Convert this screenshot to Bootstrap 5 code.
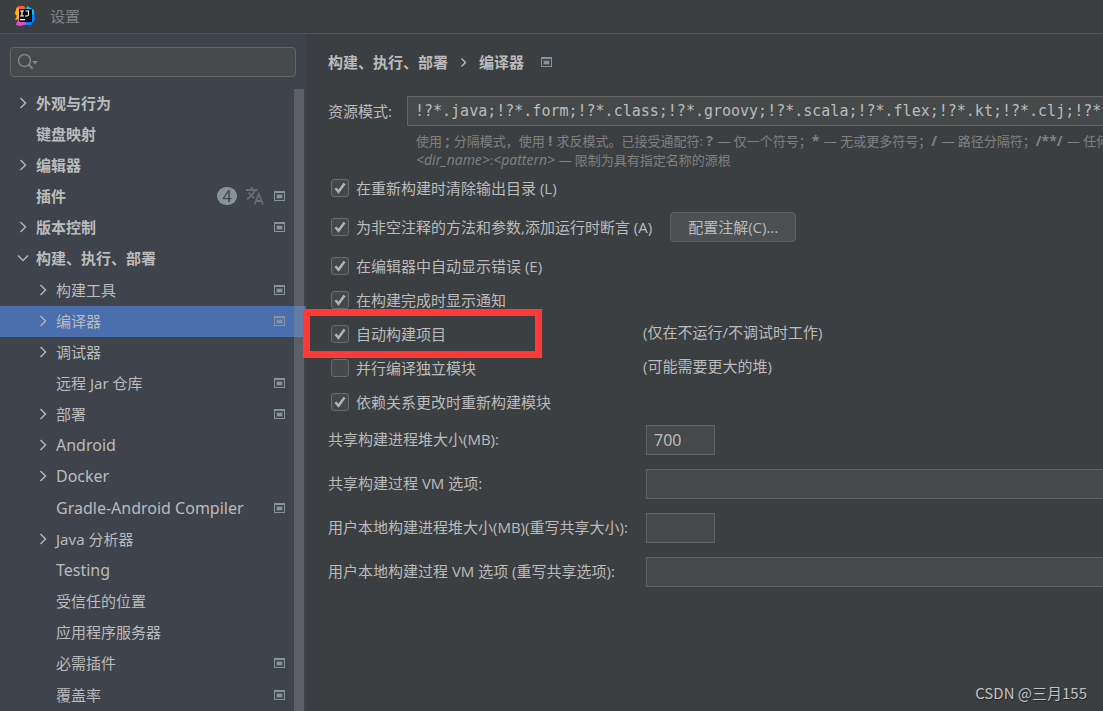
<!DOCTYPE html>
<html lang="zh-CN" data-bs-theme="dark">
<head>
<meta charset="utf-8">
<meta name="viewport" content="width=device-width, initial-scale=1">
<title>设置</title>
<link href="https://cdn.jsdelivr.net/npm/bootstrap@5.3.0/dist/css/bootstrap.min.css" rel="stylesheet">
<style>
  body { background: #3c3f41; color: #bbbbbb; font: 15px/20px "Open Sans", "Noto Sans CJK SC", sans-serif; }
  .title-bar { height: 34px; padding: 0 14px 2px; gap: 14px; border-bottom: 1px solid #505355; color: #808285; }
  .side-pane { width: 306px; background: #3e434c; }
  .search-box { margin: 13px 10px 11px; }
  .search-box svg { left: 7px; top: 6px; }
  .field { height: 30px; padding: 0 7px; background: #45494a; border: 1px solid #646464; border-radius: 0; color: #bbbbbb; font-size: 15px; }
  .field:focus { background: #45494a; color: #bbbbbb; }
  .search-box .field { border-radius: 4px; padding-left: 34px; }
  .tree-row { flex: 1 0 31px; display: flex; align-items: center; padding: 0 21px 2px 16px; color: #bbbbbb; text-decoration: none; font-family: "Noto Sans", "Noto Sans CJK SC", sans-serif; }
  .tree-row.top { font-weight: 700; }
  .tree-row.sub { padding-left: 36px; }
  .tree-row.active { background: #4b6eaf; }
  .latin { font-size: 16px; }
  .arrow { width: 14px; height: 14px; margin-right: 6px; flex: none; }
  .count { width: 20px; height: 18px; border-radius: 9px; background: #87939a; color: #3e434c; font-size: 16px; line-height: 18px; font-weight: 400; text-align: center; }
  .translate-icon { margin: 0 10px 0 9px; }
  .scroll-thumb { top: 55px; right: 2px; width: 10px; bottom: 0; background: rgba(150, 150, 150, .35); }
  .main-pane { min-width: 0; padding: 17px 0 0 22px; }
  .crumbs { height: 22px; gap: 13px; font-weight: 700; }
  .pattern-row { margin-top: 23px; gap: 15px; }
  .pattern-row .field { font-family: "DejaVu Sans Mono", monospace; padding-right: 0; }
  .hint { padding: 6px 0 1px 88px; font-size: 13px; line-height: 19px; color: #808080; }
  .hint b { padding-right: 1px; font-size: 14px; line-height: 1; }
  .hint i { font-size: 14px; line-height: 1; }
  .option { height: 34px; }
  .option .form-check-input { width: 18px; height: 18px; margin: 0 7px 1px 3px; border: 1px solid #6b6b6b; border-radius: 3px; background-color: #43494a; flex: none; }
  .option .form-check-input:checked { background-color: #43494a; border-color: #6b6b6b; background-size: 18px 18px;
    background-image: url("data:image/svg+xml,%3Csvg xmlns='http://www.w3.org/2000/svg' viewBox='0 0 18 18'%3E%3Cpath d='M4.500 9.200 7.500 12.800 13.500 4.500' fill='none' stroke='%23b4b4b4' stroke-width='2.400'/%3E%3C/svg%3E"); }
  .spaced { margin-bottom: 5px; }
  .with-note { display: grid; grid-template-columns: 315px 1fr; align-items: center; }
  .with-note > span { padding-bottom: 4px; }
  .config-btn { height: 30px; margin-left: 18px; padding: 0 17px; background: #4c5052; border: 1px solid #5e6060; border-radius: 4px; color: #bbbbbb; font-size: 15px; line-height: 20px; }
  .marker { left: -25px; top: -8px; width: 239px; bottom: -7px; border: 7px solid #ff3838; }
  .settings-grid { display: grid; grid-template-columns: 318px 1fr; row-gap: 14px; padding-top: 6px; align-items: center; }
  .settings-grid label { padding-bottom: 2px; }
  .settings-grid .field { font-family: "Noto Sans", "Noto Sans CJK SC", sans-serif; font-size: 16px; }
  .short { width: 69px; }
  .watermark { right: 16px; bottom: 8px; color: #c2c2c2; font: 15px/20px "Noto Sans CJK SC", sans-serif; text-shadow: 1px 1px 1px #222; }
</style>
</head>
<body>
<svg class="d-none">
  <symbol id="right" viewBox="0 0 14 14"><path d="M4.500 2 9.500 7 4.500 12" fill="none" stroke="#b0b3b5" stroke-width="1.500"/></symbol>
  <symbol id="down" viewBox="0 0 14 14"><path d="M2 4.500 7 9.500 12 4.500" fill="none" stroke="#b0b3b5" stroke-width="1.500"/></symbol>
  <symbol id="proj" viewBox="0 0 11 10"><path fill="#87939a" fill-rule="evenodd" d="M0 0h11v10H0zM1 2v7h9V2z"/><path fill="#87939a" fill-opacity=".35" d="M2 3h7v5H2z"/><path fill="#87939a" d="M3 4h5v3H3z"/></symbol>
</svg>
<div class="d-flex flex-column min-vh-100 overflow-hidden">
  <header class="title-bar d-flex align-items-center">
    <svg width="22" height="22" viewBox="0 0 22 22" aria-label="IntelliJ IDEA" role="img">
      <path d="M3 2 9 1 12 5 7 18 2 20 4 14 1 9z" fill="#ff318c"/>
      <path d="M1 8 3 2 7 4 5 14 1 15 3 11z" fill="#fdb60d"/>
      <path d="M4 1 10 1 13 6 5 7z" fill="#fa5c3c"/>
      <path d="M13 1 20 5 21 15 17 20 9 20 15 10z" fill="#087cfa"/>
      <path d="M13 1 20 5 20 10 12 5z" fill="#07c3f2"/>
      <path d="M2 20 5 13 13 19 6 21z" fill="#e84cc4"/>
      <path d="M5 4h13v13H5z" fill="#08080c"/>
      <path d="M6 6h4M8 6v5M6 11h4M11.500 6h3v3.500q0 1.500-1.500 1.500h-2" fill="none" stroke="#fff" stroke-width="1.200"/>
      <path d="M6 14h5v1.300H6z" fill="#fff"/>
    </svg>
    <span>设置</span>
  </header>
  <div class="d-flex flex-fill">
    <aside class="side-pane position-relative d-flex flex-column flex-shrink-0">
      <div class="search-box position-relative">
        <input type="search" class="field form-control" aria-label="搜索">
        <svg class="position-absolute" width="24" height="18" viewBox="0 0 24 18"><circle cx="7.500" cy="7.500" r="6" fill="none" stroke="#7d868c" stroke-width="1.500"/><path d="m11.500 11.500 4 4" stroke="#7d868c" stroke-width="2"/><path d="M15 8h6l-3 3.500z" fill="#7d868c"/></svg>
      </div>
      <nav class="d-flex flex-column flex-fill">
        <a href="#" class="tree-row top"><svg class="arrow"><use href="#right"/></svg>外观与行为</a>
        <a href="#" class="tree-row top"><span class="arrow"></span>键盘映射</a>
        <a href="#" class="tree-row top"><svg class="arrow"><use href="#right"/></svg>编辑器</a>
        <a href="#" class="tree-row top"><span class="arrow"></span>插件
          <span class="count ms-auto">4</span>
          <svg class="translate-icon" width="18" height="18" viewBox="0 0 18 18" fill="none" stroke="#666d75" stroke-width="1.800"><path d="M0 3h11.500M5.700 0v3M9 3Q7.500 8 1 12M2.800 5.500Q5 9.500 8.500 11M8.500 17.500 12.700 7 17 17.500M10 14h5.500"/></svg>
          <svg width="11" height="10"><use href="#proj"/></svg></a>
        <a href="#" class="tree-row top"><svg class="arrow"><use href="#right"/></svg>版本控制<svg class="ms-auto" width="11" height="10"><use href="#proj"/></svg></a>
        <a href="#" class="tree-row top"><svg class="arrow"><use href="#down"/></svg>构建、执行、部署</a>
        <a href="#" class="tree-row sub"><svg class="arrow"><use href="#right"/></svg>构建工具<svg class="ms-auto" width="11" height="10"><use href="#proj"/></svg></a>
        <a href="#" class="tree-row sub active"><svg class="arrow"><use href="#right"/></svg>编译器<svg class="ms-auto" width="11" height="10"><use href="#proj"/></svg></a>
        <a href="#" class="tree-row sub"><svg class="arrow"><use href="#right"/></svg>调试器</a>
        <a href="#" class="tree-row sub"><span class="arrow"></span>远程 Jar 仓库<svg class="ms-auto" width="11" height="10"><use href="#proj"/></svg></a>
        <a href="#" class="tree-row sub"><svg class="arrow"><use href="#right"/></svg>部署<svg class="ms-auto" width="11" height="10"><use href="#proj"/></svg></a>
        <a href="#" class="tree-row sub latin"><svg class="arrow"><use href="#right"/></svg>Android</a>
        <a href="#" class="tree-row sub latin"><svg class="arrow"><use href="#right"/></svg>Docker</a>
        <a href="#" class="tree-row sub latin"><span class="arrow"></span>Gradle-Android Compiler<svg class="ms-auto" width="11" height="10"><use href="#proj"/></svg></a>
        <a href="#" class="tree-row sub"><svg class="arrow"><use href="#right"/></svg>Java 分析器</a>
        <a href="#" class="tree-row sub latin"><span class="arrow"></span>Testing</a>
        <a href="#" class="tree-row sub"><span class="arrow"></span>受信任的位置</a>
        <a href="#" class="tree-row sub"><span class="arrow"></span>应用程序服务器</a>
        <a href="#" class="tree-row sub"><span class="arrow"></span>必需插件<svg class="ms-auto" width="11" height="10"><use href="#proj"/></svg></a>
        <a href="#" class="tree-row sub"><span class="arrow"></span>覆盖率<svg class="ms-auto" width="11" height="10"><use href="#proj"/></svg></a>
      </nav>
      <div class="scroll-thumb position-absolute"></div>
    </aside>

    <main class="main-pane position-relative flex-fill">
      <div class="crumbs d-flex align-items-center">
        <span>构建、执行、部署</span>
        <svg width="5" height="9" viewBox="0 0 5 9"><path d="M.5.5l4 4-4 4" fill="none" stroke="#bbb" stroke-width="1.300"/></svg>
        <span>编译器</span>
        <svg class="ms-1" width="11" height="10"><use href="#proj"/></svg>
      </div>
      <div class="pattern-row d-flex align-items-center">
        <label for="patterns" class="text-nowrap">资源模式:</label>
        <input id="patterns" type="text" class="field form-control border-end-0" value="!?*.java;!?*.form;!?*.class;!?*.groovy;!?*.scala;!?*.flex;!?*.kt;!?*.clj;!?*.">
      </div>
      <div class="hint text-nowrap overflow-hidden">使用 <b>;</b> 分隔模式，使用 <b>!</b> 求反模式。已接受通配符: <b>?</b> — 仅一个符号；<b>*</b> — 无或更多符号；<b>/</b> — 路径分隔符；<b>/**/</b> — 任何<br><i>&lt;dir_name&gt;</i>:<i>&lt;pattern&gt;</i> — 限制为具有指定名称的源根</div>

      <div class="option spaced d-flex align-items-center"><input class="form-check-input" type="checkbox" id="o1" checked><label for="o1">在重新构建时清除输出目录 (L)</label></div>
      <div class="option spaced d-flex align-items-center"><input class="form-check-input" type="checkbox" id="o2" checked><label for="o2">为非空注释的方法和参数,添加运行时断言 (A)</label><button type="button" class="config-btn">配置注解(C)...</button></div>
      <div class="option d-flex align-items-center"><input class="form-check-input" type="checkbox" id="o3" checked><label for="o3">在编辑器中自动显示错误 (E)</label></div>
      <div class="option d-flex align-items-center"><input class="form-check-input" type="checkbox" id="o4" checked><label for="o4">在构建完成时显示通知</label></div>
      <div class="option with-note position-relative">
        <div class="d-flex align-items-center"><input class="form-check-input" type="checkbox" id="o5" checked><label for="o5">自动构建项目</label></div>
        <span>(仅在不运行/不调试时工作)</span>
        <div class="marker position-absolute pe-none"></div>
      </div>
      <div class="option with-note">
        <div class="d-flex align-items-center"><input class="form-check-input" type="checkbox" id="o6"><label for="o6">并行编译独立模块</label></div>
        <span>(可能需要更大的堆)</span>
      </div>
      <div class="option d-flex align-items-center"><input class="form-check-input" type="checkbox" id="o7" checked><label for="o7">依赖关系更改时重新构建模块</label></div>

      <div class="settings-grid">
        <label for="f1">共享构建进程堆大小(MB):</label>
        <input id="f1" type="text" class="field form-control short" value="700">
        <label for="f2">共享构建过程 VM 选项:</label>
        <input id="f2" type="text" class="field form-control border-end-0">
        <label for="f3">用户本地构建进程堆大小(MB)(重写共享大小):</label>
        <input id="f3" type="text" class="field form-control short">
        <label for="f4">用户本地构建过程 VM 选项 (重写共享选项):</label>
        <input id="f4" type="text" class="field form-control border-end-0">
      </div>
      <div class="watermark position-absolute">CSDN @三月155</div>
    </main>
  </div>
</div>
<script src="https://cdn.jsdelivr.net/npm/bootstrap@5.3.0/dist/js/bootstrap.bundle.min.js"></script>
</body>
</html>
